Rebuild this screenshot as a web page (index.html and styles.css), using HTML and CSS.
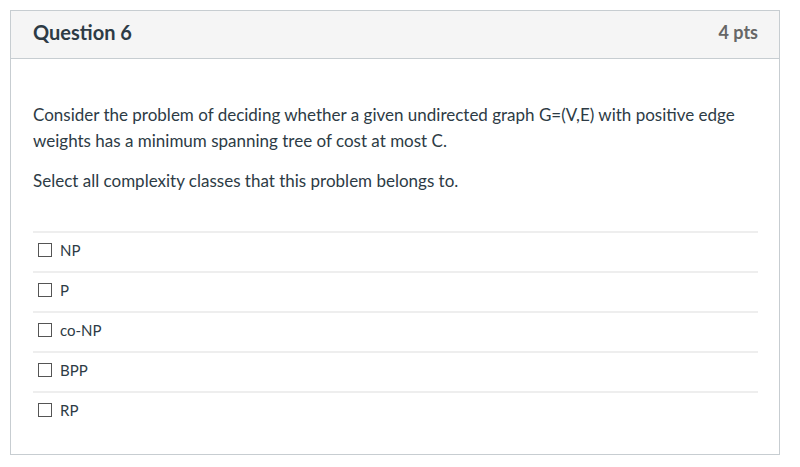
FILE: index.html
```html
<!DOCTYPE html>
<html>
<head>
<meta charset="utf-8">
<link rel="stylesheet" href="styles.css">
</head>
<body>
<div class="card">
  <div class="card-header">
    <span class="title">Question 6</span>
    <span class="pts">4 pts</span>
  </div>
  <div class="card-body">
    <p>Consider the problem of deciding whether a given undirected graph G=(V,E) with positive edge weights has a minimum spanning tree of cost at most C.</p>
    <p>Select all complexity classes that this problem belongs to.</p>
    <div class="answers">
      <label class="answer"><span class="box"></span><span>NP</span></label>
      <label class="answer"><span class="box"></span><span>P</span></label>
      <label class="answer"><span class="box"></span><span>co-NP</span></label>
      <label class="answer"><span class="box"></span><span>BPP</span></label>
      <label class="answer"><span class="box"></span><span>RP</span></label>
    </div>
  </div>
</div>
</body>
</html>
```

FILE: styles.css
```css
html, body {
  margin: 0;
  padding: 0;
  background: #ffffff;
}
body {
  padding: 10px 20px 0 10px;
  font-family: Lato, "Liberation Sans", sans-serif;
  color: #2d3b45;
}
.card {
  width: 768px;
  height: 443px;
  border: 1px solid #c7cdd1;
  background: #fff;
}
.card-header {
  box-sizing: border-box;
  height: 48px;
  background: #f5f5f5;
  border-bottom: 1px solid #c7cdd1;
  display: flex;
  align-items: center;
  justify-content: space-between;
  padding: 0 21px 5px 22px;
}
.title {
  font-size: 20px;
  font-weight: 700;
  color: #2d3b45;
}
.pts {
  font-size: 18px;
  font-weight: 700;
  color: #666666;
}
.card-body {
  padding: 43px 21px 0 22px;
}
.card-body p {
  margin: 0 0 14px 0;
  font-size: 17px;
  line-height: 26px;
}
.answers {
  margin-top: 37px;
}
.answer {
  display: flex;
  align-items: center;
  box-sizing: border-box;
  height: 40px;
  padding: 0 0 4px 5px;
  border-top: 2px solid #eeeeee;
  font-size: 15px;
}
.box {
  width: 12px;
  height: 12px;
  border: 1px solid #555;
  margin-right: 8px;
  background: #fff;
}
```
